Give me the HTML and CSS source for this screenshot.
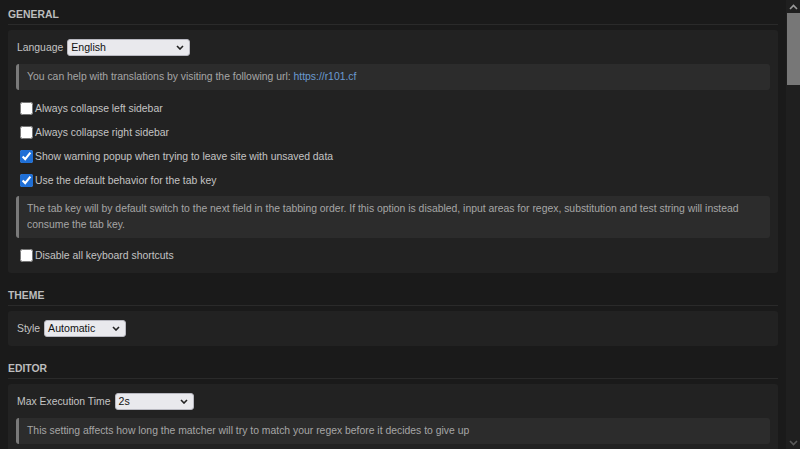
FILE: index.html
```html
<!DOCTYPE html>
<html>
<head>
<meta charset="utf-8">
<link rel="stylesheet" href="styles.css">
</head>
<body>
<div class="app">
  <main class="page">
    <section class="section">
      <h2 class="section-title">GENERAL</h2>
      <div class="card">
        <div class="field">
          <label class="label">Language</label>
          <span class="select select-lang">English</span>
        </div>
        <div class="note">You can help with translations by visiting the following url: <a class="link">https://r101.cf</a></div>
        <label class="check first"><input type="checkbox"><span>Always collapse left sidebar</span></label>
        <label class="check"><input type="checkbox"><span>Always collapse right sidebar</span></label>
        <label class="check"><input type="checkbox" checked><span>Show warning popup when trying to leave site with unsaved data</span></label>
        <label class="check"><input type="checkbox" checked><span>Use the default behavior for the tab key</span></label>
        <div class="note note-tight">The tab key will by default switch to the next field in the tabbing order. If this option is disabled, input areas for regex, substitution and test string will instead consume the tab key.</div>
        <label class="check last"><input type="checkbox"><span>Disable all keyboard shortcuts</span></label>
      </div>
    </section>
    <section class="section">
      <h2 class="section-title">THEME</h2>
      <div class="card">
        <div class="field">
          <label class="label">Style</label>
          <span class="select select-style">Automatic</span>
        </div>
      </div>
    </section>
    <section class="section">
      <h2 class="section-title">EDITOR</h2>
      <div class="card">
        <div class="field">
          <label class="label">Max Execution Time</label>
          <span class="select select-time">2s</span>
        </div>
        <div class="note">This setting affects how long the matcher will try to match your regex before it decides to give up</div>
      </div>
    </section>
  </main>
  <div class="scrollbar">
    <div class="sb-btn"><svg width="9" height="6" viewBox="0 0 9 6"><path d="M1 5 L4.5 1.5 L8 5" fill="none" stroke="#9a9a9a" stroke-width="1.6"/></svg></div>
    <div class="sb-track"><div class="sb-thumb"></div></div>
    <div class="sb-btn"><svg width="9" height="6" viewBox="0 0 9 6"><path d="M1 1 L4.5 4.5 L8 1" fill="none" stroke="#5a5a5a" stroke-width="1.6"/></svg></div>
  </div>
</div>
</body>
</html>
```

FILE: styles.css
```css
html, body {
  margin: 0;
  padding: 0;
  height: 100%;
  overflow: hidden;
  background: #1a1a1a;
}
body {
  font-family: "Liberation Sans", Arial, sans-serif;
  font-size: 10.4px;
  color: #c4c4c4;
}
.app {
  display: flex;
  height: 449px;
}
.page {
  flex: 1;
  padding: 8px 8px 0 8px;
  overflow: hidden;
}
.section {
  margin-bottom: 16px;
}
.section-title {
  margin: 0 0 5px 0;
  font-size: 10.4px;
  line-height: 13px;
  font-weight: bold;
  color: #bdbdbd;
  padding-bottom: 3px;
  border-bottom: 1px solid #2a2a2a;
}
.card {
  background: #222222;
  border-radius: 3px;
  padding: 8px;
}
.field {
  display: flex;
  align-items: center;
  height: 19px;
  gap: 4px;
}
.label {
  color: #c4c4c4;
  padding-left: 1px;
}
.select {
  box-sizing: border-box;
  height: 17px;
  line-height: 15px;
  background-color: #e9e9ed;
  border: 1px solid #b8b8c0;
  border-radius: 3px;
  color: #111;
  padding-left: 3px;
  font-size: 10.6px;
  background-image: url("data:image/svg+xml;utf8,<svg xmlns='http://www.w3.org/2000/svg' width='8' height='5' viewBox='0 0 8 5'><path d='M1 1 L4 4 L7 1' fill='none' stroke='%23222' stroke-width='1.6'/></svg>");
  background-repeat: no-repeat;
  background-position: right 5px center;
}
.select-lang { width: 123px; }
.select-style { width: 82px; }
.select-time { width: 79px; }
.note {
  margin-top: 7px;
  background: #2c2c2c;
  border-left: 3px solid #7a7a7a;
  border-radius: 3px;
  padding: 5px 8px;
  line-height: 16px;
  color: #a6a6a6;
}
.note-tight {
  margin-top: 6px;
}
.link {
  color: #6b9bd1;
  text-decoration: none;
}
.check {
  display: flex;
  align-items: center;
  height: 19px;
  margin-top: 5px;
  color: #c4c4c4;
}
.check.first { margin-top: 9px; }
.check.last { margin-top: 8px; }
.check input {
  width: 13px;
  height: 13px;
  margin: 3px 2px 3px 4px;
  accent-color: #1f6fd6;
}
.scrollbar {
  width: 14px;
  background: #1f1f1f;
  display: flex;
  flex-direction: column;
}
.sb-btn {
  height: 13px;
  display: flex;
  align-items: center;
  justify-content: center;
}
.sb-track {
  flex: 1;
  padding-left: 1px;
}
.sb-thumb {
  height: 72px;
  background: #777777;
}
```
